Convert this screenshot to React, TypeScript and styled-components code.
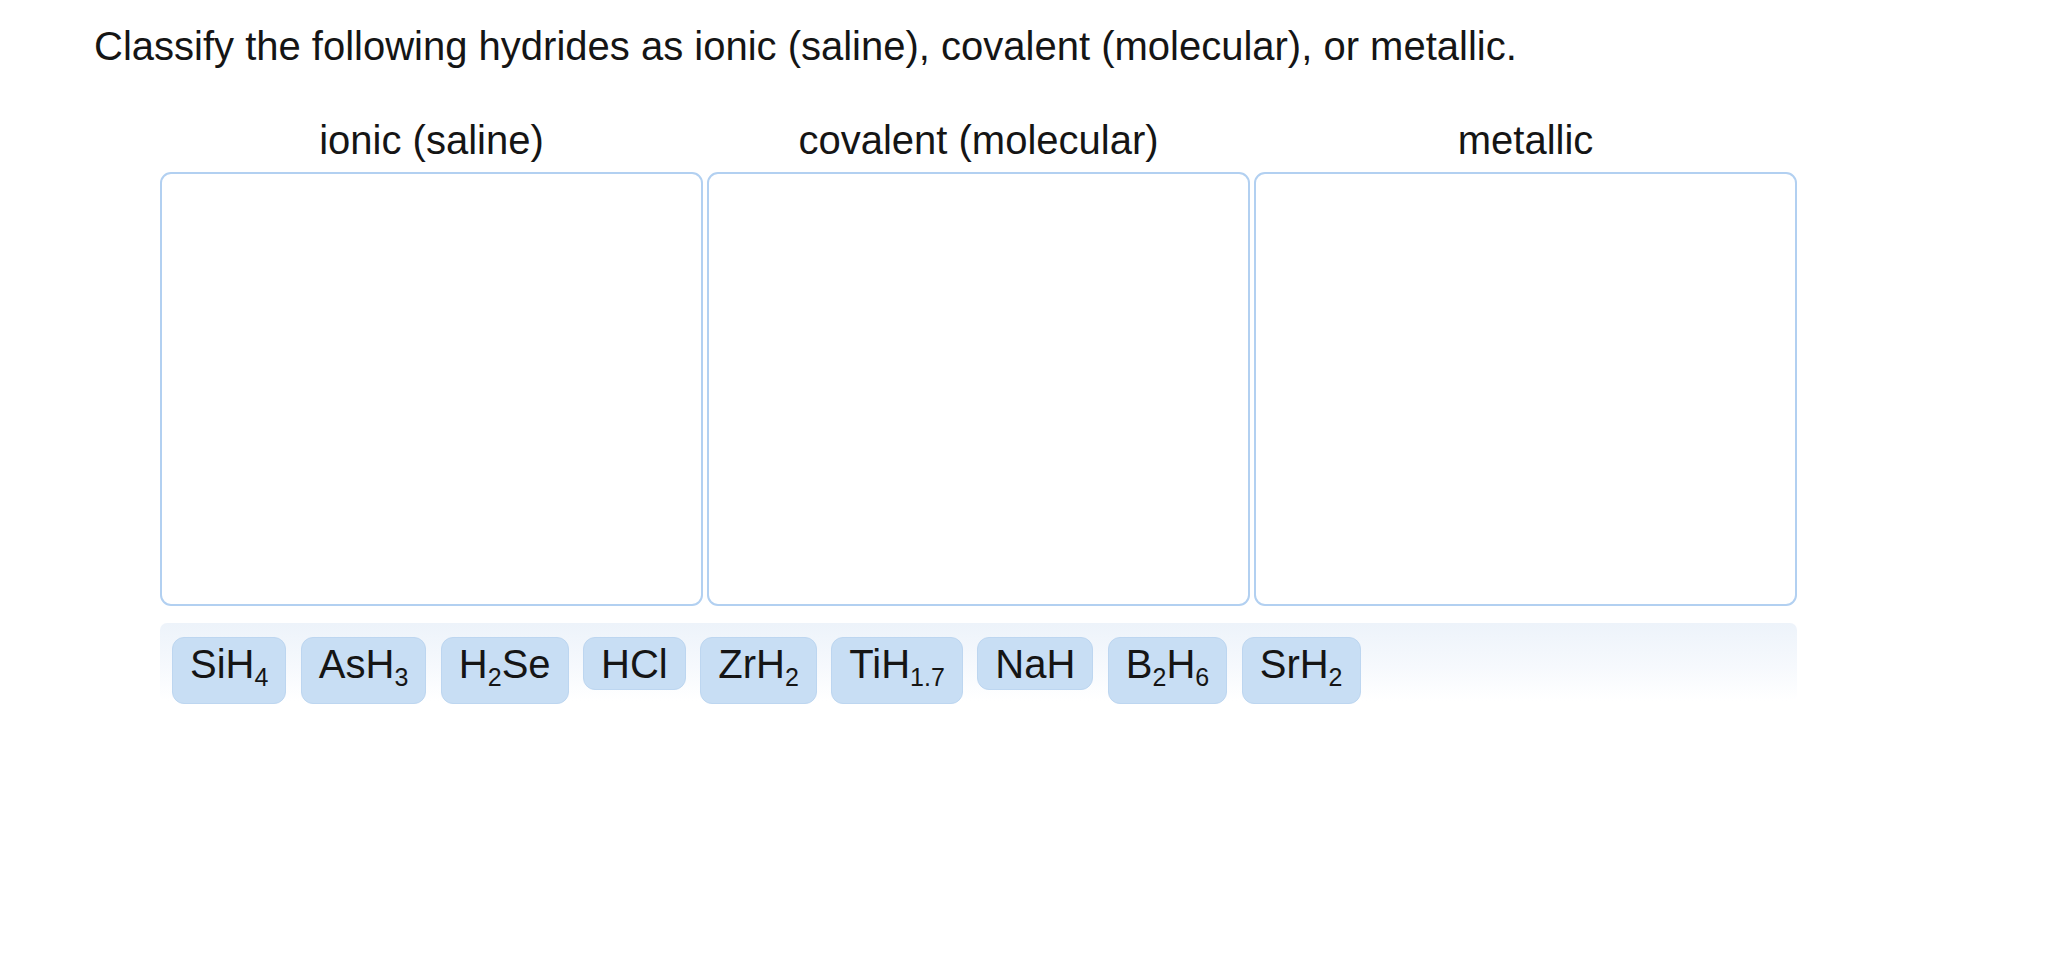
import React from "react";
import styled, { createGlobalStyle } from "styled-components";

const GlobalStyle = createGlobalStyle`
  html, body {
    margin: 0;
    padding: 0;
    background: #ffffff;
  }
  body {
    font-family: "Liberation Sans", Arial, Helvetica, sans-serif;
    color: #151515;
  }
`;

const Page = styled.div`
  width: 2046px;
  height: 980px;
  box-sizing: border-box;
  padding: 23px 0 0 94px;
  background: #ffffff;
`;

const Prompt = styled.div`
  font-size: 40px;
  line-height: 46px;
  color: #151515;
`;

const Board = styled.div`
  margin: 48px 0 0 66px;
  width: 1637px;
  display: flex;
  flex-direction: column;
`;

const Columns = styled.div`
  display: grid;
  grid-template-columns: repeat(3, 543px);
  column-gap: 4px;
`;

const Column = styled.div`
  display: flex;
  flex-direction: column;
  align-items: stretch;
`;

const Heading = styled.div`
  font-size: 40px;
  line-height: 46px;
  text-align: center;
  margin-bottom: 9px;
  color: #151515;
`;

const DropZone = styled.div`
  height: 434px;
  box-sizing: border-box;
  border: 2px solid #b2d0f1;
  border-radius: 11px;
  background: #ffffff;
`;

const Tray = styled.div`
  margin-top: 17px;
  height: 78px;
  box-sizing: border-box;
  padding: 14px 12px 0;
  border-radius: 7px;
  background: linear-gradient(to bottom, #edf3fa 0%, #f6f9fd 55%, #ffffff 100%);
  display: flex;
  align-items: flex-start;
  gap: 14.5px;
`;

const Chip = styled.div<{ $tall: boolean }>`
  flex: none;
  font-size: 40px;
  line-height: 45px;
  padding: 4px 17px ${(p) => (p.$tall ? "16px" : "2px")};
  border-radius: 12px;
  background: #c8def4;
  border: 1px solid #bdd6f0;
  color: #151515;
  white-space: nowrap;
`;

const Sub = styled.span`
  font-size: 25px;
  line-height: 0;
  position: relative;
  top: 8px;
`;

type Part = string | { sub: string };

const hydrides: Part[][] = [
  ["SiH", { sub: "4" }],
  ["AsH", { sub: "3" }],
  ["H", { sub: "2" }, "Se"],
  ["HCl"],
  ["ZrH", { sub: "2" }],
  ["TiH", { sub: "1.7" }],
  ["NaH"],
  ["B", { sub: "2" }, "H", { sub: "6" }],
  ["SrH", { sub: "2" }],
];

const categories = ["ionic (saline)", "covalent (molecular)", "metallic"];

export default function App() {
  return (
    <>
      <GlobalStyle />
      <Page>
        <Prompt>
          Classify the following hydrides as ionic (saline), covalent (molecular), or metallic.
        </Prompt>
        <Board>
          <Columns>
            {categories.map((c) => (
              <Column key={c}>
                <Heading>{c}</Heading>
                <DropZone />
              </Column>
            ))}
          </Columns>
          <Tray>
            {hydrides.map((parts, i) => {
              const tall = parts.some((p) => typeof p !== "string");
              return (
                <Chip key={i} $tall={tall}>
                  {parts.map((p, j) =>
                    typeof p === "string" ? (
                      <span key={j}>{p}</span>
                    ) : (
                      <Sub key={j}>{p.sub}</Sub>
                    )
                  )}
                </Chip>
              );
            })}
          </Tray>
        </Board>
      </Page>
    </>
  );
}
